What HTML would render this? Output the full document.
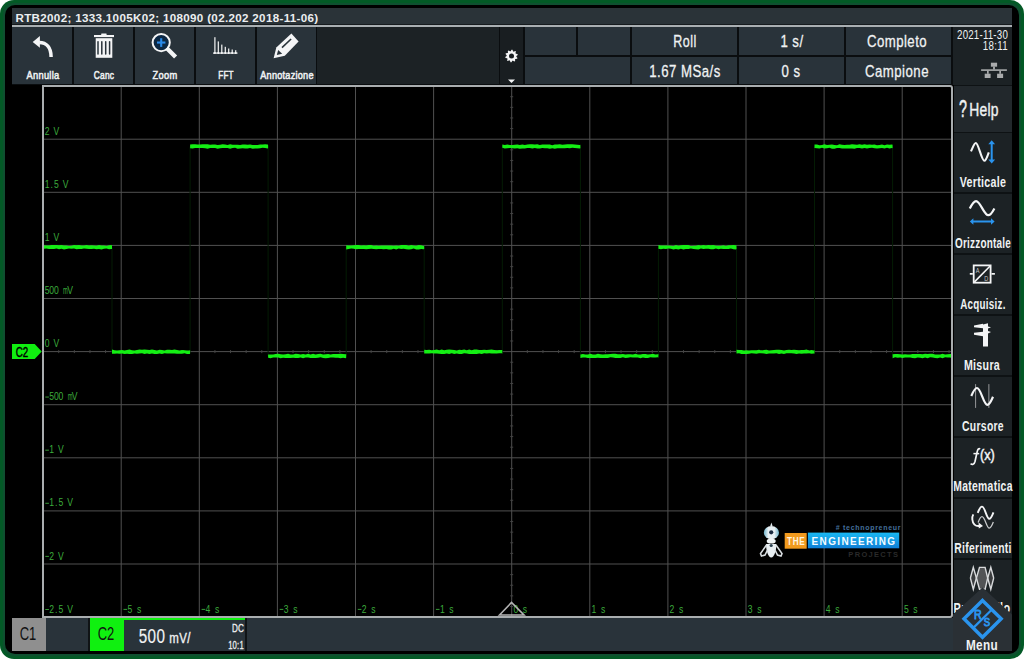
<!DOCTYPE html>
<html><head><meta charset="utf-8">
<style>
html,body{margin:0;padding:0;background:#fff;width:1024px;height:659px;overflow:hidden;position:relative}
*{box-sizing:border-box}
.a{position:absolute}
.tx{position:absolute;font-family:"Liberation Sans",sans-serif;white-space:nowrap;text-align:center;width:240px}
</style></head><body>
<div class="a" style="left:0px;top:0px;width:1024px;height:659px;background:#035a26;border-radius:14px"></div>
<div class="a" style="left:3px;top:3px;width:1018px;height:653px;background:#0f5030;border-radius:11px"></div>
<div class="a" style="left:5px;top:5px;width:1014px;height:649px;background:#000;border-radius:10px"></div>
<div class="a" style="left:12px;top:8px;width:1000px;height:17px;background:#2a3338;"></div>
<div class="a" style="left:15.5px;top:10.5px;font-family:'Liberation Sans';font-weight:bold;font-size:11.6px;line-height:13px;letter-spacing:0.33px;color:#eceef0;white-space:nowrap">RTB2002; 1333.1005K02; 108090 (02.202 2018-11-06)</div>
<div class="a" style="left:12px;top:24px;width:1000px;height:1px;background:#161b1e;"></div>
<div class="a" style="left:12px;top:25px;width:1000px;height:2px;background:#a9afb2;"></div>
<div class="a" style="left:12px;top:27px;width:1000px;height:58px;background:#0a0d0f;"></div>
<div class="a" style="left:317px;top:27px;width:182px;height:57px;background:#1c2225;"></div>
<div class="a" style="left:12px;top:27px;width:60px;height:57px;background:#29333a;"></div>
<div class="a" style="left:74px;top:27px;width:59px;height:57px;background:#29333a;"></div>
<div class="a" style="left:135px;top:27px;width:59px;height:57px;background:#29333a;"></div>
<div class="a" style="left:196px;top:27px;width:59px;height:57px;background:#29333a;"></div>
<div class="a" style="left:257px;top:27px;width:59px;height:57px;background:#29333a;"></div>
<div class="tx" style="left:-76.65px;top:69.48px;font-size:11.6px;line-height:11.6px;font-weight:normal;color:#f0f2f3;-webkit-text-stroke:0.55px #f0f2f3;letter-spacing:0.35px;transform:scaleX(0.8);transform-origin:120px 0">Annulla</div>
<div class="tx" style="left:-16.00px;top:69.48px;font-size:11.6px;line-height:11.6px;font-weight:normal;color:#f0f2f3;-webkit-text-stroke:0.55px #f0f2f3;letter-spacing:0.35px;transform:scaleX(0.72);transform-origin:120px 0">Canc</div>
<div class="tx" style="left:45.10px;top:69.48px;font-size:11.6px;line-height:11.6px;font-weight:normal;color:#f0f2f3;-webkit-text-stroke:0.55px #f0f2f3;letter-spacing:0.35px;transform:scaleX(0.8);transform-origin:120px 0">Zoom</div>
<div class="tx" style="left:105.70px;top:69.48px;font-size:11.6px;line-height:11.6px;font-weight:normal;color:#f0f2f3;-webkit-text-stroke:0.55px #f0f2f3;letter-spacing:0.35px;transform:scaleX(0.7);transform-origin:120px 0">FFT</div>
<div class="tx" style="left:166.60px;top:69.48px;font-size:11.6px;line-height:11.6px;font-weight:normal;color:#f0f2f3;-webkit-text-stroke:0.55px #f0f2f3;letter-spacing:0.3px;transform:scaleX(0.79);transform-origin:120px 0">Annotazione</div>
<div class="a" style="left:500px;top:27px;width:23px;height:57px;background:#191e21;"></div>
<div class="a" style="left:525px;top:27px;width:51px;height:28px;background:#29333a;"></div>
<div class="a" style="left:578px;top:27px;width:52px;height:28px;background:#29333a;"></div>
<div class="a" style="left:632px;top:27px;width:105px;height:28px;background:#29333a;"></div>
<div class="a" style="left:739px;top:27px;width:105px;height:28px;background:#29333a;"></div>
<div class="a" style="left:846px;top:27px;width:105px;height:28px;background:#29333a;"></div>
<div class="a" style="left:525px;top:57px;width:105px;height:27px;background:#29333a;"></div>
<div class="a" style="left:632px;top:57px;width:105px;height:27px;background:#29333a;"></div>
<div class="a" style="left:739px;top:57px;width:105px;height:27px;background:#29333a;"></div>
<div class="a" style="left:846px;top:57px;width:105px;height:27px;background:#29333a;"></div>
<div class="tx" style="left:565.00px;top:32.97px;font-size:17.4px;line-height:17.4px;font-weight:normal;color:#f0f2f3;-webkit-text-stroke:0.3px #f0f2f3;letter-spacing:0.6px;transform:scaleX(0.72);transform-origin:120px 0">Roll</div>
<div class="tx" style="left:671.90px;top:32.67px;font-size:17.4px;line-height:17.4px;font-weight:normal;color:#f0f2f3;-webkit-text-stroke:0.3px #f0f2f3;letter-spacing:0.6px;transform:scaleX(0.76);transform-origin:120px 0">1 s/</div>
<div class="tx" style="left:777.35px;top:32.87px;font-size:17.4px;line-height:17.4px;font-weight:normal;color:#f0f2f3;-webkit-text-stroke:0.3px #f0f2f3;letter-spacing:0.6px;transform:scaleX(0.76);transform-origin:120px 0">Completo</div>
<div class="tx" style="left:565.10px;top:62.77px;font-size:17.4px;line-height:17.4px;font-weight:normal;color:#f0f2f3;-webkit-text-stroke:0.3px #f0f2f3;letter-spacing:0.6px;transform:scaleX(0.76);transform-origin:120px 0">1.67 MSa/s</div>
<div class="tx" style="left:671.25px;top:62.67px;font-size:17.4px;line-height:17.4px;font-weight:normal;color:#f0f2f3;-webkit-text-stroke:0.3px #f0f2f3;letter-spacing:0.6px;transform:scaleX(0.76);transform-origin:120px 0">0 s</div>
<div class="tx" style="left:777.00px;top:62.67px;font-size:17.4px;line-height:17.4px;font-weight:normal;color:#f0f2f3;-webkit-text-stroke:0.3px #f0f2f3;letter-spacing:0.6px;transform:scaleX(0.76);transform-origin:120px 0">Campione</div>
<div class="a" style="left:953px;top:27px;width:59px;height:58px;background:#1c2225;"></div>
<div class="tx" style="left:768.00px;top:28.76px;text-align:right;font-size:12.8px;line-height:12.8px;font-weight:normal;color:#f0f2f3;letter-spacing:0.25px;transform:scaleX(0.76);transform-origin:240px 0">2021-11-30</div>
<div class="tx" style="left:768.00px;top:39.96px;text-align:right;font-size:12.8px;line-height:12.8px;font-weight:normal;color:#f0f2f3;letter-spacing:0.4px;transform:scaleX(0.76);transform-origin:240px 0">18:11</div>
<div class="a" style="left:954px;top:85px;width:58px;height:566px;background:#0e1214;"></div>
<div class="a" style="left:954px;top:86px;width:58px;height:45.5px;background:#22282c;"></div>
<div class="a" style="left:954px;top:132.5px;width:58px;height:59.5px;background:#1c2225;"></div>
<div class="a" style="left:954px;top:193.5px;width:58px;height:59.5px;background:#1c2225;"></div>
<div class="a" style="left:954px;top:254.5px;width:58px;height:59.5px;background:#1c2225;"></div>
<div class="a" style="left:954px;top:315.5px;width:58px;height:59.5px;background:#1c2225;"></div>
<div class="a" style="left:954px;top:376.5px;width:58px;height:59.5px;background:#1c2225;"></div>
<div class="a" style="left:954px;top:437.5px;width:58px;height:59.5px;background:#1c2225;"></div>
<div class="a" style="left:954px;top:498.5px;width:58px;height:59.5px;background:#1c2225;"></div>
<div class="a" style="left:954px;top:559.5px;width:58px;height:91.5px;background:#1c2225;"></div>
<div class="tx" style="left:842.50px;top:97.53px;font-size:23px;line-height:23px;font-weight:normal;color:#f0f2f3;-webkit-text-stroke:0.5px #f0f2f3;transform:scaleX(0.62);transform-origin:120px 0">?</div>
<div class="tx" style="left:863.50px;top:100.76px;font-size:18px;line-height:18px;font-weight:normal;color:#f0f2f3;-webkit-text-stroke:0.4px #f0f2f3;letter-spacing:0.3px;transform:scaleX(0.77);transform-origin:120px 0">Help</div>
<div class="tx" style="left:862.85px;top:175.15px;font-size:14px;line-height:14px;font-weight:bold;color:#f0f2f3;letter-spacing:0.4px;transform:scaleX(0.76);transform-origin:120px 0">Verticale</div>
<div class="tx" style="left:862.50px;top:236.45px;font-size:14px;line-height:14px;font-weight:bold;color:#f0f2f3;letter-spacing:0.3px;transform:scaleX(0.71);transform-origin:120px 0">Orizzontale</div>
<div class="tx" style="left:862.70px;top:297.15px;font-size:14px;line-height:14px;font-weight:bold;color:#f0f2f3;letter-spacing:0.4px;transform:scaleX(0.7);transform-origin:120px 0">Acquisiz.</div>
<div class="tx" style="left:862.15px;top:357.65px;font-size:14px;line-height:14px;font-weight:bold;color:#f0f2f3;letter-spacing:0.4px;transform:scaleX(0.76);transform-origin:120px 0">Misura</div>
<div class="tx" style="left:862.70px;top:419.15px;font-size:14px;line-height:14px;font-weight:bold;color:#f0f2f3;letter-spacing:0.4px;transform:scaleX(0.74);transform-origin:120px 0">Cursore</div>
<div class="tx" style="left:863.00px;top:478.65px;font-size:14px;line-height:14px;font-weight:bold;color:#f0f2f3;letter-spacing:0.4px;transform:scaleX(0.74);transform-origin:120px 0">Matematica</div>
<div class="tx" style="left:863.00px;top:540.95px;font-size:14px;line-height:14px;font-weight:bold;color:#f0f2f3;letter-spacing:0.4px;transform:scaleX(0.74);transform-origin:120px 0">Riferimenti</div>
<div class="tx" style="left:862.30px;top:600.85px;font-size:14px;line-height:14px;font-weight:bold;color:#f0f2f3;letter-spacing:0.4px;transform:scaleX(0.775);transform-origin:120px 0">Protocollo</div>
<div class="a" style="left:12px;top:618px;width:941px;height:33px;background:#29333a;"></div>
<div class="a" style="left:12px;top:618px;width:34px;height:33px;background:#8f8f8f;"></div>
<div class="a" style="left:88px;top:618px;width:2px;height:33px;background:#101416;"></div>
<div class="a" style="left:90px;top:618px;width:34px;height:33px;background:#10f010;"></div>
<div class="tx" style="left:-91.85px;top:625.26px;font-size:18px;line-height:18px;font-weight:normal;color:#111;transform:scaleX(0.72);transform-origin:120px 0">C1</div>
<div class="a" style="left:124px;top:618px;width:121px;height:2px;background:#10f010;"></div>
<div class="a" style="left:245px;top:618px;width:2px;height:33px;background:#101416;"></div>
<div class="tx" style="left:31.75px;top:626.61px;font-size:19.6px;line-height:19.6px;font-weight:normal;color:#f0f2f3;-webkit-text-stroke:0.15px #f0f2f3;letter-spacing:0.5px;transform:scaleX(0.78);transform-origin:120px 0">500</div>
<div class="tx" style="left:60.40px;top:631.35px;font-size:14px;line-height:14px;font-weight:normal;color:#f0f2f3;-webkit-text-stroke:0.35px #f0f2f3;letter-spacing:0.5px;transform:scaleX(0.82);transform-origin:120px 0">mV/</div>
<div class="tx" style="left:118.00px;top:621.88px;font-size:11.6px;line-height:11.6px;font-weight:normal;color:#f0f2f3;-webkit-text-stroke:0.3px #f0f2f3;letter-spacing:0.3px;transform:scaleX(0.7);transform-origin:120px 0">DC</div>
<div class="tx" style="left:116.20px;top:638.98px;font-size:11.6px;line-height:11.6px;font-weight:normal;color:#f0f2f3;-webkit-text-stroke:0.3px #f0f2f3;letter-spacing:0.3px;transform:scaleX(0.66);transform-origin:120px 0">10:1</div>
<div class="tx" style="left:-13.65px;top:625.26px;font-size:18px;line-height:18px;font-weight:normal;color:#111;transform:scaleX(0.72);transform-origin:120px 0">C2</div>
<svg class="a" style="left:0;top:0" width="1024" height="659" viewBox="0 0 1024 659">
<rect x="120.70" y="87" width="1" height="529" fill="#505050"/>
<rect x="198.80" y="87" width="1" height="529" fill="#505050"/>
<rect x="276.90" y="87" width="1" height="529" fill="#505050"/>
<rect x="355.00" y="87" width="1" height="529" fill="#505050"/>
<rect x="433.10" y="87" width="1" height="529" fill="#505050"/>
<rect x="511.20" y="87" width="1" height="529" fill="#505050"/>
<rect x="589.30" y="87" width="1" height="529" fill="#505050"/>
<rect x="667.40" y="87" width="1" height="529" fill="#505050"/>
<rect x="745.50" y="87" width="1" height="529" fill="#505050"/>
<rect x="823.60" y="87" width="1" height="529" fill="#505050"/>
<rect x="901.70" y="87" width="1" height="529" fill="#505050"/>
<rect x="44" y="138.70" width="907" height="1" fill="#505050"/>
<rect x="44" y="191.80" width="907" height="1" fill="#505050"/>
<rect x="44" y="244.90" width="907" height="1" fill="#505050"/>
<rect x="44" y="298.00" width="907" height="1" fill="#505050"/>
<rect x="44" y="351.10" width="907" height="1" fill="#505050"/>
<rect x="44" y="404.20" width="907" height="1" fill="#505050"/>
<rect x="44" y="457.30" width="907" height="1" fill="#505050"/>
<rect x="44" y="510.40" width="907" height="1" fill="#505050"/>
<rect x="44" y="563.50" width="907" height="1" fill="#505050"/>
<rect x="58.22" y="350.10" width="1" height="3" fill="#444"/>
<rect x="73.84" y="350.10" width="1" height="3" fill="#444"/>
<rect x="89.46" y="350.10" width="1" height="3" fill="#444"/>
<rect x="105.08" y="350.10" width="1" height="3" fill="#444"/>
<rect x="136.32" y="350.10" width="1" height="3" fill="#444"/>
<rect x="151.94" y="350.10" width="1" height="3" fill="#444"/>
<rect x="167.56" y="350.10" width="1" height="3" fill="#444"/>
<rect x="183.18" y="350.10" width="1" height="3" fill="#444"/>
<rect x="214.42" y="350.10" width="1" height="3" fill="#444"/>
<rect x="230.04" y="350.10" width="1" height="3" fill="#444"/>
<rect x="245.66" y="350.10" width="1" height="3" fill="#444"/>
<rect x="261.28" y="350.10" width="1" height="3" fill="#444"/>
<rect x="292.52" y="350.10" width="1" height="3" fill="#444"/>
<rect x="308.14" y="350.10" width="1" height="3" fill="#444"/>
<rect x="323.76" y="350.10" width="1" height="3" fill="#444"/>
<rect x="339.38" y="350.10" width="1" height="3" fill="#444"/>
<rect x="370.62" y="350.10" width="1" height="3" fill="#444"/>
<rect x="386.24" y="350.10" width="1" height="3" fill="#444"/>
<rect x="401.86" y="350.10" width="1" height="3" fill="#444"/>
<rect x="417.48" y="350.10" width="1" height="3" fill="#444"/>
<rect x="448.72" y="350.10" width="1" height="3" fill="#444"/>
<rect x="464.34" y="350.10" width="1" height="3" fill="#444"/>
<rect x="479.96" y="350.10" width="1" height="3" fill="#444"/>
<rect x="495.58" y="350.10" width="1" height="3" fill="#444"/>
<rect x="526.82" y="350.10" width="1" height="3" fill="#444"/>
<rect x="542.44" y="350.10" width="1" height="3" fill="#444"/>
<rect x="558.06" y="350.10" width="1" height="3" fill="#444"/>
<rect x="573.68" y="350.10" width="1" height="3" fill="#444"/>
<rect x="604.92" y="350.10" width="1" height="3" fill="#444"/>
<rect x="620.54" y="350.10" width="1" height="3" fill="#444"/>
<rect x="636.16" y="350.10" width="1" height="3" fill="#444"/>
<rect x="651.78" y="350.10" width="1" height="3" fill="#444"/>
<rect x="683.02" y="350.10" width="1" height="3" fill="#444"/>
<rect x="698.64" y="350.10" width="1" height="3" fill="#444"/>
<rect x="714.26" y="350.10" width="1" height="3" fill="#444"/>
<rect x="729.88" y="350.10" width="1" height="3" fill="#444"/>
<rect x="761.12" y="350.10" width="1" height="3" fill="#444"/>
<rect x="776.74" y="350.10" width="1" height="3" fill="#444"/>
<rect x="792.36" y="350.10" width="1" height="3" fill="#444"/>
<rect x="807.98" y="350.10" width="1" height="3" fill="#444"/>
<rect x="839.22" y="350.10" width="1" height="3" fill="#444"/>
<rect x="854.84" y="350.10" width="1" height="3" fill="#444"/>
<rect x="870.46" y="350.10" width="1" height="3" fill="#444"/>
<rect x="886.08" y="350.10" width="1" height="3" fill="#444"/>
<rect x="917.32" y="350.10" width="1" height="3" fill="#444"/>
<rect x="932.94" y="350.10" width="1" height="3" fill="#444"/>
<rect x="948.56" y="350.10" width="1" height="3" fill="#444"/>
<rect x="510.20" y="96.22" width="3" height="1" fill="#444"/>
<rect x="510.20" y="106.84" width="3" height="1" fill="#444"/>
<rect x="510.20" y="117.46" width="3" height="1" fill="#444"/>
<rect x="510.20" y="128.08" width="3" height="1" fill="#444"/>
<rect x="510.20" y="149.32" width="3" height="1" fill="#444"/>
<rect x="510.20" y="159.94" width="3" height="1" fill="#444"/>
<rect x="510.20" y="170.56" width="3" height="1" fill="#444"/>
<rect x="510.20" y="181.18" width="3" height="1" fill="#444"/>
<rect x="510.20" y="202.42" width="3" height="1" fill="#444"/>
<rect x="510.20" y="213.04" width="3" height="1" fill="#444"/>
<rect x="510.20" y="223.66" width="3" height="1" fill="#444"/>
<rect x="510.20" y="234.28" width="3" height="1" fill="#444"/>
<rect x="510.20" y="255.52" width="3" height="1" fill="#444"/>
<rect x="510.20" y="266.14" width="3" height="1" fill="#444"/>
<rect x="510.20" y="276.76" width="3" height="1" fill="#444"/>
<rect x="510.20" y="287.38" width="3" height="1" fill="#444"/>
<rect x="510.20" y="308.62" width="3" height="1" fill="#444"/>
<rect x="510.20" y="319.24" width="3" height="1" fill="#444"/>
<rect x="510.20" y="329.86" width="3" height="1" fill="#444"/>
<rect x="510.20" y="340.48" width="3" height="1" fill="#444"/>
<rect x="510.20" y="361.72" width="3" height="1" fill="#444"/>
<rect x="510.20" y="372.34" width="3" height="1" fill="#444"/>
<rect x="510.20" y="382.96" width="3" height="1" fill="#444"/>
<rect x="510.20" y="393.58" width="3" height="1" fill="#444"/>
<rect x="510.20" y="414.82" width="3" height="1" fill="#444"/>
<rect x="510.20" y="425.44" width="3" height="1" fill="#444"/>
<rect x="510.20" y="436.06" width="3" height="1" fill="#444"/>
<rect x="510.20" y="446.68" width="3" height="1" fill="#444"/>
<rect x="510.20" y="467.92" width="3" height="1" fill="#444"/>
<rect x="510.20" y="478.54" width="3" height="1" fill="#444"/>
<rect x="510.20" y="489.16" width="3" height="1" fill="#444"/>
<rect x="510.20" y="499.78" width="3" height="1" fill="#444"/>
<rect x="510.20" y="521.02" width="3" height="1" fill="#444"/>
<rect x="510.20" y="531.64" width="3" height="1" fill="#444"/>
<rect x="510.20" y="542.26" width="3" height="1" fill="#444"/>
<rect x="510.20" y="552.88" width="3" height="1" fill="#444"/>
<rect x="510.20" y="574.12" width="3" height="1" fill="#444"/>
<rect x="510.20" y="584.74" width="3" height="1" fill="#444"/>
<rect x="510.20" y="595.36" width="3" height="1" fill="#444"/>
<rect x="510.20" y="605.98" width="3" height="1" fill="#444"/>
</svg>
<div class="a" style="left:42px;top:85px;width:911px;height:533px;border:2px solid #a9adaf;border-radius:0 3px 3px 0"></div>
<svg class="a" style="left:0;top:0" width="1024" height="659" viewBox="0 0 1024 659">
<rect x="111.5" y="247.2" width="1" height="104.7" fill="#041c04"/>
<rect x="189.6" y="146.5" width="1" height="205.4" fill="#041c04"/>
<rect x="267.6" y="146.5" width="1" height="209.4" fill="#041c04"/>
<rect x="345.7" y="247.2" width="1" height="108.8" fill="#041c04"/>
<rect x="423.7" y="247.2" width="1" height="104.7" fill="#041c04"/>
<rect x="501.8" y="146.5" width="1" height="205.4" fill="#041c04"/>
<rect x="579.9" y="146.5" width="1" height="209.4" fill="#041c04"/>
<rect x="657.9" y="247.2" width="1" height="108.8" fill="#041c04"/>
<rect x="736.0" y="247.2" width="1" height="104.7" fill="#041c04"/>
<rect x="814.0" y="146.5" width="1" height="205.4" fill="#041c04"/>
<rect x="892.1" y="146.5" width="1" height="209.4" fill="#041c04"/>
<polygon points="44.0,245.2 46.5,245.6 49.0,245.4 51.5,245.0 54.0,244.9 56.5,245.0 59.0,245.3 61.5,245.0 64.0,245.5 66.5,245.5 69.0,245.9 71.5,245.8 74.0,245.0 76.5,245.2 79.0,245.1 81.5,245.5 84.0,245.4 86.5,245.0 89.0,245.6 91.5,245.2 94.0,245.4 96.5,245.7 99.0,245.1 101.5,245.4 104.0,245.6 106.5,245.9 109.0,245.3 111.5,245.1 112.0,245.4 112.0,249.0 111.5,249.0 109.0,249.3 106.5,248.6 104.0,248.8 101.5,249.4 99.0,249.1 96.5,249.2 94.0,248.8 91.5,249.1 89.0,248.9 86.5,248.7 84.0,248.6 81.5,248.9 79.0,249.1 76.5,249.3 74.0,248.6 71.5,248.8 69.0,248.5 66.5,248.9 64.0,249.4 61.5,248.7 59.0,249.3 56.5,248.6 54.0,248.9 51.5,249.0 49.0,248.9 46.5,248.6 44.0,248.7" fill="#14ee14"/>
<polygon points="112.0,349.6 114.5,350.3 117.0,350.4 119.5,350.2 122.0,350.1 124.5,350.4 127.0,350.0 129.5,349.6 132.0,350.2 134.5,350.4 137.0,349.9 139.5,349.6 142.0,349.7 144.5,349.6 147.0,349.7 149.5,349.9 152.0,349.6 154.5,350.1 157.0,350.4 159.5,349.8 162.0,349.9 164.5,350.5 167.0,349.7 169.5,349.8 172.0,350.1 174.5,349.6 177.0,349.9 179.5,350.5 182.0,350.1 184.5,350.2 187.0,350.4 189.5,350.4 190.1,350.1 190.1,353.7 189.5,353.9 187.0,353.9 184.5,353.2 182.0,353.8 179.5,353.8 177.0,353.7 174.5,353.6 172.0,353.4 169.5,353.6 167.0,353.4 164.5,353.3 162.0,354.0 159.5,353.6 157.0,354.0 154.5,354.0 152.0,353.6 149.5,354.0 147.0,353.4 144.5,353.9 142.0,353.3 139.5,353.6 137.0,353.8 134.5,353.4 132.0,354.1 129.5,353.9 127.0,353.8 124.5,354.1 122.0,353.6 119.5,353.7 117.0,353.5 114.5,353.7 112.0,353.8" fill="#14ee14"/>
<polygon points="190.1,144.6 192.6,144.3 195.1,144.3 197.6,144.4 200.1,144.5 202.6,144.2 205.1,144.3 207.6,144.2 210.1,144.8 212.6,144.5 215.1,144.6 217.6,145.0 220.1,144.7 222.6,144.3 225.1,144.5 227.6,145.0 230.1,144.2 232.6,144.7 235.1,144.7 237.6,144.7 240.1,145.1 242.6,144.5 245.1,144.4 247.6,144.7 250.1,144.5 252.6,145.0 255.1,145.1 257.6,145.0 260.1,144.4 262.6,144.6 265.1,144.2 267.6,144.5 268.1,144.7 268.1,148.3 267.6,148.5 265.1,148.1 262.6,147.8 260.1,148.3 257.6,148.5 255.1,148.6 252.6,148.8 250.1,148.0 247.6,148.6 245.1,148.6 242.6,148.2 240.1,148.5 237.6,148.8 235.1,147.8 232.6,147.9 230.1,148.8 227.6,148.0 225.1,148.1 222.6,147.9 220.1,148.3 217.6,148.8 215.1,147.9 212.6,148.1 210.1,147.9 207.6,148.7 205.1,148.2 202.6,148.0 200.1,147.9 197.6,148.0 195.1,147.9 192.6,148.4 190.1,148.2" fill="#14ee14"/>
<polygon points="268.1,354.6 270.6,354.6 273.1,354.6 275.6,353.9 278.1,353.8 280.6,354.3 283.1,354.5 285.6,354.3 288.1,353.7 290.6,354.6 293.1,354.4 295.6,353.8 298.1,354.0 300.6,354.6 303.1,354.1 305.6,354.4 308.1,353.8 310.6,354.6 313.1,353.8 315.6,354.6 318.1,354.0 320.6,353.8 323.1,354.6 325.6,354.2 328.1,354.1 330.6,354.5 333.1,353.9 335.6,353.9 338.1,353.9 340.6,353.8 343.1,354.0 345.6,354.2 346.2,354.1 346.2,357.8 345.6,358.2 343.1,357.7 340.6,358.2 338.1,357.7 335.6,357.8 333.1,357.5 330.6,357.5 328.1,358.1 325.6,358.2 323.1,357.9 320.6,357.3 318.1,357.8 315.6,357.9 313.1,358.1 310.6,358.1 308.1,357.4 305.6,357.4 303.1,358.2 300.6,357.6 298.1,358.1 295.6,358.0 293.1,357.7 290.6,358.0 288.1,357.9 285.6,358.0 283.1,357.7 280.6,358.2 278.1,357.5 275.6,357.5 273.1,357.6 270.6,358.2 268.1,357.7" fill="#14ee14"/>
<polygon points="346.2,245.3 348.7,245.4 351.2,245.4 353.7,245.3 356.2,244.9 358.7,245.1 361.2,245.6 363.7,245.2 366.2,245.5 368.7,245.0 371.2,245.1 373.7,245.7 376.2,245.5 378.7,245.8 381.2,245.5 383.7,245.4 386.2,245.4 388.7,245.4 391.2,245.6 393.7,245.8 396.2,245.5 398.7,245.7 401.2,245.0 403.7,245.0 406.2,245.0 408.7,245.7 411.2,245.1 413.7,245.6 416.2,245.8 418.7,245.1 421.2,245.3 423.7,245.9 424.2,245.4 424.2,249.0 423.7,249.3 421.2,249.0 418.7,249.5 416.2,249.5 413.7,248.6 411.2,249.2 408.7,249.4 406.2,249.2 403.7,248.7 401.2,248.9 398.7,248.6 396.2,249.4 393.7,248.8 391.2,249.4 388.7,249.4 386.2,249.0 383.7,249.2 381.2,249.0 378.7,248.9 376.2,249.3 373.7,249.0 371.2,248.8 368.7,249.1 366.2,249.3 363.7,249.0 361.2,249.1 358.7,249.0 356.2,249.3 353.7,248.7 351.2,248.5 348.7,249.0 346.2,249.4" fill="#14ee14"/>
<polygon points="424.2,349.7 426.7,350.1 429.2,349.7 431.7,350.3 434.2,350.1 436.7,349.6 439.2,350.2 441.7,349.6 444.2,350.3 446.7,349.7 449.2,349.6 451.7,349.8 454.2,350.0 456.7,350.4 459.2,349.7 461.7,350.1 464.2,349.6 466.7,350.2 469.2,349.6 471.7,350.2 474.2,349.6 476.7,349.6 479.2,350.0 481.7,350.1 484.2,349.8 486.7,350.1 489.2,349.7 491.7,349.6 494.2,349.9 496.7,350.3 499.2,350.1 501.7,349.9 502.3,350.1 502.3,353.7 501.7,353.2 499.2,353.3 496.7,353.4 494.2,353.5 491.7,353.4 489.2,353.3 486.7,353.4 484.2,353.3 481.7,354.1 479.2,353.5 476.7,354.0 474.2,354.0 471.7,354.0 469.2,354.1 466.7,353.6 464.2,353.2 461.7,353.9 459.2,354.1 456.7,353.4 454.2,354.1 451.7,353.3 449.2,353.9 446.7,353.4 444.2,354.1 441.7,354.1 439.2,353.7 436.7,353.5 434.2,353.6 431.7,353.2 429.2,353.5 426.7,353.5 424.2,353.6" fill="#14ee14"/>
<polygon points="502.3,144.5 504.8,144.9 507.3,144.4 509.8,145.1 512.3,145.0 514.8,144.7 517.3,144.6 519.8,144.9 522.3,144.5 524.8,144.9 527.3,144.6 529.8,144.3 532.3,144.3 534.8,144.5 537.3,144.3 539.8,145.1 542.3,144.5 544.8,144.5 547.3,144.4 549.8,144.5 552.3,145.2 554.8,144.4 557.3,144.5 559.8,144.2 562.3,144.7 564.8,144.4 567.3,144.2 569.8,144.3 572.3,144.2 574.8,144.5 577.3,144.8 579.8,145.0 580.4,144.7 580.4,148.3 579.8,148.5 577.3,148.3 574.8,148.0 572.3,147.8 569.8,148.2 567.3,148.1 564.8,148.3 562.3,148.3 559.8,148.2 557.3,148.2 554.8,148.8 552.3,148.3 549.8,148.8 547.3,148.2 544.8,148.3 542.3,148.0 539.8,148.5 537.3,148.6 534.8,148.0 532.3,148.5 529.8,147.9 527.3,148.1 524.8,148.4 522.3,148.6 519.8,148.8 517.3,148.3 514.8,148.6 512.3,148.2 509.8,147.9 507.3,148.3 504.8,148.4 502.3,147.8" fill="#14ee14"/>
<polygon points="580.4,354.4 582.9,354.0 585.4,354.6 587.9,354.4 590.4,353.7 592.9,354.5 595.4,354.4 597.9,353.8 600.4,354.2 602.9,354.5 605.4,354.2 607.9,354.3 610.4,353.9 612.9,353.8 615.4,353.8 617.9,354.2 620.4,354.3 622.9,354.1 625.4,354.4 627.9,354.2 630.4,354.3 632.9,354.4 635.4,353.7 637.9,354.4 640.4,354.4 642.9,354.1 645.4,354.1 647.9,354.4 650.4,354.3 652.9,353.8 655.4,354.4 657.9,354.2 658.4,354.1 658.4,357.8 657.9,357.3 655.4,357.6 652.9,357.5 650.4,357.3 647.9,357.9 645.4,357.9 642.9,357.6 640.4,358.2 637.9,357.5 635.4,357.5 632.9,357.5 630.4,357.3 627.9,357.8 625.4,358.0 622.9,357.3 620.4,357.9 617.9,357.9 615.4,358.1 612.9,357.6 610.4,357.3 607.9,357.9 605.4,358.1 602.9,358.1 600.4,358.1 597.9,357.8 595.4,358.1 592.9,357.9 590.4,358.1 587.9,357.9 585.4,357.4 582.9,357.6 580.4,358.1" fill="#14ee14"/>
<polygon points="658.4,245.0 660.9,245.6 663.4,245.6 665.9,245.4 668.4,245.4 670.9,245.8 673.4,245.9 675.9,244.9 678.4,245.7 680.9,245.3 683.4,245.1 685.9,245.1 688.4,245.0 690.9,245.9 693.4,245.7 695.9,245.8 698.4,245.1 700.9,245.4 703.4,244.9 705.9,245.4 708.4,245.0 710.9,245.2 713.4,244.9 715.9,245.7 718.4,245.8 720.9,245.8 723.4,245.3 725.9,245.9 728.4,245.3 730.9,245.2 733.4,245.0 735.9,245.2 736.5,245.4 736.5,249.0 735.9,249.4 733.4,249.3 730.9,248.5 728.4,248.9 725.9,249.1 723.4,248.9 720.9,248.8 718.4,249.2 715.9,248.6 713.4,249.3 710.9,249.3 708.4,248.8 705.9,248.8 703.4,249.0 700.9,248.5 698.4,249.4 695.9,249.2 693.4,249.0 690.9,248.6 688.4,249.0 685.9,249.1 683.4,249.4 680.9,248.8 678.4,249.5 675.9,249.0 673.4,249.4 670.9,248.7 668.4,248.6 665.9,249.0 663.4,248.8 660.9,249.2 658.4,248.8" fill="#14ee14"/>
<polygon points="736.5,349.8 739.0,350.1 741.5,349.9 744.0,350.4 746.5,350.2 749.0,350.5 751.5,350.3 754.0,350.3 756.5,350.3 759.0,349.8 761.5,350.5 764.0,350.0 766.5,349.8 769.0,350.5 771.5,350.2 774.0,350.1 776.5,349.7 779.0,349.8 781.5,350.0 784.0,350.5 786.5,350.0 789.0,349.7 791.5,349.9 794.0,349.8 796.5,350.1 799.0,350.3 801.5,350.0 804.0,349.9 806.5,349.6 809.0,350.5 811.5,350.1 814.0,350.4 814.5,350.1 814.5,353.7 814.0,353.4 811.5,353.8 809.0,353.3 806.5,353.4 804.0,353.5 801.5,353.7 799.0,353.6 796.5,354.0 794.0,353.4 791.5,353.2 789.0,353.2 786.5,353.3 784.0,354.1 781.5,353.4 779.0,354.1 776.5,353.3 774.0,353.5 771.5,353.5 769.0,353.4 766.5,353.9 764.0,353.5 761.5,353.3 759.0,353.2 756.5,353.8 754.0,353.6 751.5,353.2 749.0,353.7 746.5,354.1 744.0,354.0 741.5,354.1 739.0,353.3 736.5,353.4" fill="#14ee14"/>
<polygon points="814.5,144.5 817.0,144.6 819.5,145.2 822.0,145.1 824.5,144.2 827.0,145.1 829.5,144.8 832.0,144.6 834.5,145.0 837.0,145.2 839.5,144.3 842.0,144.7 844.5,145.1 847.0,144.8 849.5,144.7 852.0,144.2 854.5,144.4 857.0,144.8 859.5,144.3 862.0,144.8 864.5,144.3 867.0,144.7 869.5,144.6 872.0,144.8 874.5,144.5 877.0,145.2 879.5,145.1 882.0,144.4 884.5,145.2 887.0,144.5 889.5,144.7 892.0,144.6 892.6,144.7 892.6,148.3 892.0,148.1 889.5,148.5 887.0,147.8 884.5,148.5 882.0,148.0 879.5,148.3 877.0,148.4 874.5,148.3 872.0,147.8 869.5,148.0 867.0,148.4 864.5,147.9 862.0,148.5 859.5,148.1 857.0,148.1 854.5,148.7 852.0,148.6 849.5,148.4 847.0,148.6 844.5,148.5 842.0,148.5 839.5,148.0 837.0,148.0 834.5,148.7 832.0,148.7 829.5,147.8 827.0,148.3 824.5,148.5 822.0,147.8 819.5,148.6 817.0,148.2 814.5,148.0" fill="#14ee14"/>
<polygon points="892.6,354.3 895.1,353.9 897.6,354.0 900.1,354.3 902.6,354.4 905.1,354.2 907.6,354.6 910.1,354.5 912.6,353.9 915.1,353.9 917.6,354.1 920.1,353.9 922.6,354.3 925.1,353.8 927.6,353.9 930.1,353.8 932.6,353.7 935.1,354.5 937.6,354.4 940.1,354.6 942.6,353.8 945.1,354.4 947.6,354.3 950.1,354.0 951.0,354.1 951.0,357.8 950.1,357.6 947.6,357.6 945.1,357.3 942.6,358.2 940.1,357.6 937.6,358.2 935.1,358.1 932.6,357.6 930.1,357.3 927.6,358.2 925.1,357.6 922.6,358.2 920.1,357.7 917.6,357.4 915.1,358.2 912.6,358.0 910.1,357.5 907.6,357.6 905.1,357.5 902.6,358.0 900.1,357.4 897.6,357.7 895.1,357.3 892.6,358.2" fill="#14ee14"/>
<text transform="translate(47.10,134.7) scale(0.78,1)" text-anchor="middle" font-family="Liberation Sans" font-size="11" fill="#3cac3c">2</text><text transform="translate(56.30,134.7) scale(0.78,1)" text-anchor="middle" font-family="Liberation Sans" font-size="11" fill="#3cac3c">V</text>
<text transform="translate(47.10,187.8) scale(0.78,1)" text-anchor="middle" font-family="Liberation Sans" font-size="11" fill="#3cac3c">1</text><text transform="translate(51.70,187.8) scale(0.78,1)" text-anchor="middle" font-family="Liberation Sans" font-size="11" fill="#3cac3c">.</text><text transform="translate(56.30,187.8) scale(0.78,1)" text-anchor="middle" font-family="Liberation Sans" font-size="11" fill="#3cac3c">5</text><text transform="translate(65.50,187.8) scale(0.78,1)" text-anchor="middle" font-family="Liberation Sans" font-size="11" fill="#3cac3c">V</text>
<text transform="translate(47.10,240.9) scale(0.78,1)" text-anchor="middle" font-family="Liberation Sans" font-size="11" fill="#3cac3c">1</text><text transform="translate(56.30,240.9) scale(0.78,1)" text-anchor="middle" font-family="Liberation Sans" font-size="11" fill="#3cac3c">V</text>
<text transform="translate(47.10,294.0) scale(0.78,1)" text-anchor="middle" font-family="Liberation Sans" font-size="11" fill="#3cac3c">5</text><text transform="translate(51.70,294.0) scale(0.78,1)" text-anchor="middle" font-family="Liberation Sans" font-size="11" fill="#3cac3c">0</text><text transform="translate(56.30,294.0) scale(0.78,1)" text-anchor="middle" font-family="Liberation Sans" font-size="11" fill="#3cac3c">0</text><text transform="translate(65.50,294.0) scale(0.52,1)" text-anchor="middle" font-family="Liberation Sans" font-size="11" fill="#3cac3c">m</text><text transform="translate(70.10,294.0) scale(0.78,1)" text-anchor="middle" font-family="Liberation Sans" font-size="11" fill="#3cac3c">V</text>
<text transform="translate(47.10,347.1) scale(0.78,1)" text-anchor="middle" font-family="Liberation Sans" font-size="11" fill="#3cac3c">0</text><text transform="translate(56.30,347.1) scale(0.78,1)" text-anchor="middle" font-family="Liberation Sans" font-size="11" fill="#3cac3c">V</text>
<rect x="45.30" y="396.60" width="3.6" height="0.9" fill="#3cac3c"/><text transform="translate(51.70,400.2) scale(0.78,1)" text-anchor="middle" font-family="Liberation Sans" font-size="11" fill="#3cac3c">5</text><text transform="translate(56.30,400.2) scale(0.78,1)" text-anchor="middle" font-family="Liberation Sans" font-size="11" fill="#3cac3c">0</text><text transform="translate(60.90,400.2) scale(0.78,1)" text-anchor="middle" font-family="Liberation Sans" font-size="11" fill="#3cac3c">0</text><text transform="translate(70.10,400.2) scale(0.52,1)" text-anchor="middle" font-family="Liberation Sans" font-size="11" fill="#3cac3c">m</text><text transform="translate(74.70,400.2) scale(0.78,1)" text-anchor="middle" font-family="Liberation Sans" font-size="11" fill="#3cac3c">V</text>
<rect x="45.30" y="449.70" width="3.6" height="0.9" fill="#3cac3c"/><text transform="translate(51.70,453.3) scale(0.78,1)" text-anchor="middle" font-family="Liberation Sans" font-size="11" fill="#3cac3c">1</text><text transform="translate(60.90,453.3) scale(0.78,1)" text-anchor="middle" font-family="Liberation Sans" font-size="11" fill="#3cac3c">V</text>
<rect x="45.30" y="502.80" width="3.6" height="0.9" fill="#3cac3c"/><text transform="translate(51.70,506.4) scale(0.78,1)" text-anchor="middle" font-family="Liberation Sans" font-size="11" fill="#3cac3c">1</text><text transform="translate(56.30,506.4) scale(0.78,1)" text-anchor="middle" font-family="Liberation Sans" font-size="11" fill="#3cac3c">.</text><text transform="translate(60.90,506.4) scale(0.78,1)" text-anchor="middle" font-family="Liberation Sans" font-size="11" fill="#3cac3c">5</text><text transform="translate(70.10,506.4) scale(0.78,1)" text-anchor="middle" font-family="Liberation Sans" font-size="11" fill="#3cac3c">V</text>
<rect x="45.30" y="555.90" width="3.6" height="0.9" fill="#3cac3c"/><text transform="translate(51.70,559.5) scale(0.78,1)" text-anchor="middle" font-family="Liberation Sans" font-size="11" fill="#3cac3c">2</text><text transform="translate(60.90,559.5) scale(0.78,1)" text-anchor="middle" font-family="Liberation Sans" font-size="11" fill="#3cac3c">V</text>
<rect x="45.30" y="609.00" width="3.6" height="0.9" fill="#3cac3c"/><text transform="translate(51.70,612.6) scale(0.78,1)" text-anchor="middle" font-family="Liberation Sans" font-size="11" fill="#3cac3c">2</text><text transform="translate(56.30,612.6) scale(0.78,1)" text-anchor="middle" font-family="Liberation Sans" font-size="11" fill="#3cac3c">.</text><text transform="translate(60.90,612.6) scale(0.78,1)" text-anchor="middle" font-family="Liberation Sans" font-size="11" fill="#3cac3c">5</text><text transform="translate(70.10,612.6) scale(0.78,1)" text-anchor="middle" font-family="Liberation Sans" font-size="11" fill="#3cac3c">V</text>
<rect x="123.50" y="608.90" width="3.6" height="0.9" fill="#3cac3c"/><text transform="translate(129.90,612.5) scale(0.78,1)" text-anchor="middle" font-family="Liberation Sans" font-size="11" fill="#3cac3c">5</text><text transform="translate(139.10,612.5) scale(0.78,1)" text-anchor="middle" font-family="Liberation Sans" font-size="11" fill="#3cac3c">s</text>
<rect x="201.60" y="608.90" width="3.6" height="0.9" fill="#3cac3c"/><text transform="translate(208.00,612.5) scale(0.78,1)" text-anchor="middle" font-family="Liberation Sans" font-size="11" fill="#3cac3c">4</text><text transform="translate(217.20,612.5) scale(0.78,1)" text-anchor="middle" font-family="Liberation Sans" font-size="11" fill="#3cac3c">s</text>
<rect x="279.70" y="608.90" width="3.6" height="0.9" fill="#3cac3c"/><text transform="translate(286.10,612.5) scale(0.78,1)" text-anchor="middle" font-family="Liberation Sans" font-size="11" fill="#3cac3c">3</text><text transform="translate(295.30,612.5) scale(0.78,1)" text-anchor="middle" font-family="Liberation Sans" font-size="11" fill="#3cac3c">s</text>
<rect x="357.80" y="608.90" width="3.6" height="0.9" fill="#3cac3c"/><text transform="translate(364.20,612.5) scale(0.78,1)" text-anchor="middle" font-family="Liberation Sans" font-size="11" fill="#3cac3c">2</text><text transform="translate(373.40,612.5) scale(0.78,1)" text-anchor="middle" font-family="Liberation Sans" font-size="11" fill="#3cac3c">s</text>
<rect x="435.90" y="608.90" width="3.6" height="0.9" fill="#3cac3c"/><text transform="translate(442.30,612.5) scale(0.78,1)" text-anchor="middle" font-family="Liberation Sans" font-size="11" fill="#3cac3c">1</text><text transform="translate(451.50,612.5) scale(0.78,1)" text-anchor="middle" font-family="Liberation Sans" font-size="11" fill="#3cac3c">s</text>
<text transform="translate(515.80,612.5) scale(0.78,1)" text-anchor="middle" font-family="Liberation Sans" font-size="11" fill="#3cac3c">0</text><text transform="translate(525.00,612.5) scale(0.78,1)" text-anchor="middle" font-family="Liberation Sans" font-size="11" fill="#3cac3c">s</text>
<text transform="translate(593.90,612.5) scale(0.78,1)" text-anchor="middle" font-family="Liberation Sans" font-size="11" fill="#3cac3c">1</text><text transform="translate(603.10,612.5) scale(0.78,1)" text-anchor="middle" font-family="Liberation Sans" font-size="11" fill="#3cac3c">s</text>
<text transform="translate(672.00,612.5) scale(0.78,1)" text-anchor="middle" font-family="Liberation Sans" font-size="11" fill="#3cac3c">2</text><text transform="translate(681.20,612.5) scale(0.78,1)" text-anchor="middle" font-family="Liberation Sans" font-size="11" fill="#3cac3c">s</text>
<text transform="translate(750.10,612.5) scale(0.78,1)" text-anchor="middle" font-family="Liberation Sans" font-size="11" fill="#3cac3c">3</text><text transform="translate(759.30,612.5) scale(0.78,1)" text-anchor="middle" font-family="Liberation Sans" font-size="11" fill="#3cac3c">s</text>
<text transform="translate(828.20,612.5) scale(0.78,1)" text-anchor="middle" font-family="Liberation Sans" font-size="11" fill="#3cac3c">4</text><text transform="translate(837.40,612.5) scale(0.78,1)" text-anchor="middle" font-family="Liberation Sans" font-size="11" fill="#3cac3c">s</text>
<text transform="translate(906.30,612.5) scale(0.78,1)" text-anchor="middle" font-family="Liberation Sans" font-size="11" fill="#3cac3c">5</text><text transform="translate(915.50,612.5) scale(0.78,1)" text-anchor="middle" font-family="Liberation Sans" font-size="11" fill="#3cac3c">s</text>
<path d="M499.5 615 L511.5 602.5 L524 615 Z" fill="none" stroke="#b4b4b4" stroke-width="1.6"/>
<path d="M12 344 H34.7 L41.7 351.5 L34.7 359 H12 Z" fill="#10ee10"/>
<text transform="translate(15.7,356.7) scale(0.70,1)" font-family="Liberation Sans" font-size="14" fill="#000" stroke="#000" stroke-width="0.45">C2</text>
</svg>
<svg class="a" style="left:0;top:0" width="1024" height="659" viewBox="0 0 1024 659">
<path d="M32.7 42 L39.9 36 L39.9 47.7 Z" fill="#f4f5f6"/>
<path d="M39.2 42.4 C46.5 42.4 51.1 47.5 51.1 57" fill="none" stroke="#f4f5f6" stroke-width="3.5"/>
<rect x="94" y="35" width="20" height="2.1" fill="#f4f5f6"/>
<rect x="101.2" y="33.4" width="5.4" height="2" rx="0.5" fill="#f4f5f6"/>
<rect x="95.7" y="38.2" width="16.6" height="19.6" fill="#f4f5f6"/>
<rect x="97.25" y="40.9" width="1.5" height="13.9" rx="0.75" fill="#29333a"/>
<rect x="101.05" y="40.9" width="1.5" height="13.9" rx="0.75" fill="#29333a"/>
<rect x="104.95" y="40.9" width="1.5" height="13.9" rx="0.75" fill="#29333a"/>
<rect x="108.85" y="40.9" width="1.5" height="13.9" rx="0.75" fill="#29333a"/>
<line x1="166.6" y1="48" x2="175.6" y2="57" stroke="#f4f5f6" stroke-width="4.4"/>
<circle cx="161.2" cy="42.55" r="7.8" fill="#0c2844"/>
<circle cx="161.2" cy="42.55" r="8.6" fill="none" stroke="#f4f5f6" stroke-width="2"/>
<rect x="157" y="41.5" width="8.4" height="2.1" fill="#2a8ae8"/>
<rect x="160.15" y="38.2" width="2.1" height="8.7" fill="#2a8ae8"/>
<rect x="213" y="52.5" width="24.5" height="1.2" fill="#f4f5f6"/>
<rect x="214.30" y="37.2" width="1.2" height="16.0" fill="#f4f5f6"/>
<circle cx="214.9" cy="52.9" r="1.0" fill="#f4f5f6"/>
<rect x="217.70" y="41.4" width="1.2" height="11.8" fill="#f4f5f6"/>
<circle cx="218.3" cy="52.9" r="1.0" fill="#f4f5f6"/>
<rect x="221.20" y="44.6" width="1.2" height="8.6" fill="#f4f5f6"/>
<circle cx="221.8" cy="52.9" r="1.0" fill="#f4f5f6"/>
<rect x="224.70" y="46.8" width="1.2" height="6.4" fill="#f4f5f6"/>
<circle cx="225.3" cy="52.9" r="1.0" fill="#f4f5f6"/>
<rect x="228.10" y="48.5" width="1.2" height="4.7" fill="#f4f5f6"/>
<circle cx="228.7" cy="52.9" r="1.0" fill="#f4f5f6"/>
<rect x="231.60" y="49.5" width="1.2" height="3.7" fill="#f4f5f6"/>
<circle cx="232.2" cy="52.9" r="1.0" fill="#f4f5f6"/>
<rect x="235.10" y="50.2" width="1.2" height="3.0" fill="#f4f5f6"/>
<circle cx="235.7" cy="52.9" r="1.0" fill="#f4f5f6"/>
<path d="M273.6 58.2 L276.3 47.5 L291.4 33.4 L298.6 41.4 L284.8 55.7 Z" fill="#f4f5f6"/>
<line x1="282" y1="47.6" x2="291.1" y2="39" stroke="#29333a" stroke-width="1.6"/>
<path d="M278.2 49.9 L276.8 54.9 L282.2 53.8 Z" fill="#29333a"/>
<polygon points="511.50,49.70 512.49,49.78 513.01,51.34 513.72,51.63 515.20,50.90 515.95,51.55 515.46,53.12 515.87,53.78 517.49,54.05 517.72,55.01 516.40,56.00 516.34,56.77 517.49,57.95 517.11,58.86 515.46,58.88 514.96,59.46 515.20,61.10 514.36,61.61 513.01,60.66 512.27,60.84 511.50,62.30 510.51,62.22 509.99,60.66 509.28,60.37 507.80,61.10 507.05,60.45 507.54,58.88 507.13,58.22 505.51,57.95 505.28,56.99 506.60,56.00 506.66,55.23 505.51,54.05 505.89,53.14 507.54,53.12 508.04,52.54 507.80,50.90 508.64,50.39 509.99,51.34 510.73,51.16" fill="#f4f5f6"/>
<circle cx="511.5" cy="56" r="2.5" fill="#191e21"/>
<path d="M508 79.4 L515 79.4 L511.5 82.9 Z" fill="#f4f5f6"/>
<rect x="990.9" y="62.7" width="6.2" height="4" fill="#a9abac"/>
<rect x="993.1" y="66.5" width="1.8" height="3" fill="#a9abac"/>
<rect x="981.1" y="69.3" width="25.8" height="1.6" fill="#a9abac"/>
<rect x="987" y="70.8" width="1.7" height="3" fill="#a9abac"/>
<rect x="999.3" y="70.8" width="1.7" height="3" fill="#a9abac"/>
<rect x="984.7" y="73.7" width="5.9" height="4.3" fill="#a9abac"/>
<rect x="997.1" y="73.7" width="6" height="4.3" fill="#a9abac"/>
<path d="M971 151.4 C973 147 974.3 143 975.8 143 C978.5 143 981.5 160.8 984.4 160.8 C986 160.8 987.5 156 988.8 152.3" fill="none" stroke="#f4f5f6" stroke-width="2.1"/>
<rect x="990.7" y="143" width="2" height="18" fill="#2a94ee"/>
<path d="M988.3 144.2 L991.7 140.3 L995.1 144.2 Z" fill="#2a94ee"/>
<path d="M988.3 159.6 L991.7 163.5 L995.1 159.6 Z" fill="#2a94ee"/>
<path d="M969.8 208.6 C971.8 204.5 973.8 201.1 976.1 201.1 C980.3 201.1 984 215.2 988.3 215.2 C990.8 215.2 992.6 211.8 994.4 208.4" fill="none" stroke="#f4f5f6" stroke-width="2.2"/>
<rect x="972" y="220.5" width="20.5" height="2" fill="#2a94ee"/>
<path d="M973.4 218.3 L969.8 221.5 L973.4 224.7 Z" fill="#2a94ee"/>
<path d="M991 218.3 L994.6 221.5 L991 224.7 Z" fill="#2a94ee"/>
<rect x="973.7" y="265.4" width="16.9" height="17.3" fill="none" stroke="#f4f5f6" stroke-width="1.8"/>
<rect x="969.8" y="273" width="3" height="1.7" fill="#f4f5f6"/>
<rect x="991.5" y="273" width="3.4" height="1.7" fill="#f4f5f6"/>
<line x1="974" y1="282.4" x2="990.4" y2="265.8" stroke="#f4f5f6" stroke-width="1.6"/>
<text transform="translate(977.7,273.3) scale(0.8,1)" text-anchor="middle" font-family="Liberation Sans" font-size="7" fill="#c8c8c8">A</text>
<text transform="translate(986.3,281.2) scale(0.8,1)" text-anchor="middle" font-family="Liberation Sans" font-size="7" fill="#c8c8c8">D</text>
<path d="M983 324.6 L988 323.2 L988 346.6 L983 346.6 Z" fill="#f4f5f6"/>
<path d="M974 325.4 L983 323.8 L983 328.3 L974 327.3 Z" fill="#f4f5f6"/>
<path d="M974 332.7 L983 331.8 L983 336.2 L974 334.7 Z" fill="#f4f5f6"/>
<path d="M988 326.4 L991 327.3 L988 328.6 Z" fill="#f4f5f6"/>
<path d="M988 331 L991 332.1 L988 333.4 Z" fill="#f4f5f6"/>
<rect x="975" y="384.1" width="1.1" height="23.8" fill="#8a8c8e"/>
<rect x="988.3" y="384.1" width="1.1" height="23.8" fill="#8a8c8e"/>
<path d="M971.3 396 C973 392 974.8 388 976.9 388 C981 388 983.5 404.8 987.4 404.8 C989.7 404.8 991.5 400 993 396.8" fill="none" stroke="#f4f5f6" stroke-width="2.2"/>
<path d="M970.6 463.6 C972.2 465 974.2 464.6 975 461.5 L977.2 451.6 C977.8 449 978.8 448.2 980.2 448.9" fill="none" stroke="#f4f5f6" stroke-width="1.7"/>
<line x1="973.4" y1="453.6" x2="979.2" y2="453.6" stroke="#f4f5f6" stroke-width="1.5"/>
<text transform="translate(980,460.2) scale(0.85,1)" font-family="Liberation Sans" font-size="15" fill="#f4f5f6" stroke="#f4f5f6" stroke-width="0.45">(x)</text>
<path d="M977.7 512.9 C979 509.5 980.3 506.6 982 506.6 C985 506.6 986.5 518.8 989.3 518.8 C991 518.8 992.2 515.5 993.4 512.4" fill="none" stroke="#f4f5f6" stroke-width="1.9"/>
<path d="M978.1 522.4 C979.4 519 980.5 516.6 982 516.6 C985 516.6 986.5 528.2 989.3 528.2 C991 528.2 992.2 525 993.4 521.9" fill="none" stroke="#c8cacc" stroke-width="1.3"/>
<path d="M973.3 514.4 C971.8 517 971.8 522 974.5 524.6 C976 526 978 526.2 979.5 526" fill="none" stroke="#f4f5f6" stroke-width="1.9"/>
<path d="M978.6 522.6 L983 526 L978.8 528.6 Z" fill="#f4f5f6"/>
<path d="M976.4 578 L979.5 567.4 L985.1 567.4 L987.7 578 L985.1 589.3 L979.5 589.3 Z" fill="#525456"/>
<path d="M970.4 578 L973.3 567.4 L976.4 578 L973.3 589.3 Z" fill="#3a3c3e"/>
<path d="M987.7 578 L990.8 567.4 L993.7 578 L990.8 589.3 Z" fill="#3a3c3e"/>
<path d="M970.4 578 L973.3 567.4 L976.4 578 L979.5 589.3 L985.1 589.3 L987.7 578 L990.8 567.4 L993.7 578" fill="none" stroke="#d8dadc" stroke-width="1.4"/>
<path d="M970.4 578 L973.3 589.3 L976.4 578 L979.5 567.4 L985.1 567.4 L987.7 578 L990.8 589.3 L993.7 578" fill="none" stroke="#d8dadc" stroke-width="1.4"/>
</svg>
<svg class="a" style="left:0;top:0" width="1024" height="659" viewBox="0 0 1024 659">
<path d="M953 614.5 L982.5 587.5 L1012 614.5 L1012 651 L953 651 Z" fill="#2a3035"/>
</svg>
<div class="tx" style="left:862.35px;top:637.75px;font-size:14px;line-height:14px;font-weight:bold;color:#f0f2f3;letter-spacing:0.4px;transform:scaleX(0.84);transform-origin:120px 0">Menu</div>
<svg class="a" style="left:0;top:0" width="1024" height="659" viewBox="0 0 1024 659">
<path d="M982.5 600.5 L1001.2 618.8 L982.5 637.3 L964 618.8 Z" fill="none" stroke="#2a94ee" stroke-width="3.4"/>
<line x1="992.2" y1="609.2" x2="972.8" y2="628.4" stroke="#2a94ee" stroke-width="2.2"/>
<text transform="translate(977.8,619.2) scale(0.82,1)" text-anchor="middle" font-family="Liberation Sans" font-size="13" fill="#2a94ee" stroke="#2a94ee" stroke-width="0.9">R</text>
<text transform="translate(986.9,626.2) scale(0.9,1)" text-anchor="middle" font-family="Liberation Sans" font-size="10.5" fill="#2a94ee" stroke="#2a94ee" stroke-width="0.9">S</text>
</svg>
<svg class="a" style="left:0;top:0" width="1024" height="659" viewBox="0 0 1024 659">
<defs><linearGradient id="eg" x1="0" y1="0" x2="0" y2="1"><stop offset="0" stop-color="#1ab8f2"/><stop offset="1" stop-color="#0f7fd6"/></linearGradient><linearGradient id="hd" x1="0" y1="0" x2="1" y2="0"><stop offset="0" stop-color="#6fb4cc"/><stop offset="0.3" stop-color="#e8f0f4"/><stop offset="0.7" stop-color="#e8f0f4"/><stop offset="1" stop-color="#6fb4cc"/></linearGradient></defs>
<rect x="784.7" y="533" width="22" height="15.7" fill="#f29a1e"/>
<text transform="translate(796.2,545.2) scale(0.78,1)" text-anchor="middle" font-family="Liberation Sans" font-weight="bold" font-size="10.5" fill="#fff5e0" letter-spacing="0.9">THE</text>
<rect x="807.9" y="532.6" width="91.3" height="15.7" fill="url(#eg)"/>
<text transform="translate(854,545.1) scale(0.95,1)" text-anchor="middle" font-family="Liberation Sans" font-weight="bold" font-size="10.5" fill="#f4fbff" letter-spacing="1.45">ENGINEERING</text>
<text x="901.2" y="530.4" text-anchor="end" font-family="Liberation Sans" font-weight="bold" font-size="7" fill="#44709c" letter-spacing="0.7"># technopreneur</text>
<text x="899.2" y="557" text-anchor="end" font-family="Liberation Sans" font-weight="bold" font-size="7.5" fill="#2a2a2a" letter-spacing="1.3">PROJECTS</text>
<path d="M771.4 522.5 L772.6 526 L770.2 526 Z" fill="#dfe8ec"/>
<ellipse cx="771.4" cy="532.7" rx="7.6" ry="6.6" fill="url(#hd)"/>
<circle cx="771.2" cy="532.3" r="2.1" fill="#1a2a40"/>
<ellipse cx="771.2" cy="541" rx="4.5" ry="2.6" fill="#f0f4f6"/>
<path d="M766 544 C766 550 768 557.5 771.2 557.5 C774.4 557.5 776.4 550 776.4 544 Z" fill="#e8eef2"/>
<circle cx="771.2" cy="545.5" r="1.6" fill="#2a4050"/>
<path d="M766.5 545 L760.5 553.5 L761.5 556 L765 555 L767.5 550" fill="none" stroke="#d8dde0" stroke-width="1.6"/>
<path d="M776 545 L782 553.5 L781 556 L777.5 555 L775 550" fill="none" stroke="#d8dde0" stroke-width="1.6"/>
</svg>
</body></html>
